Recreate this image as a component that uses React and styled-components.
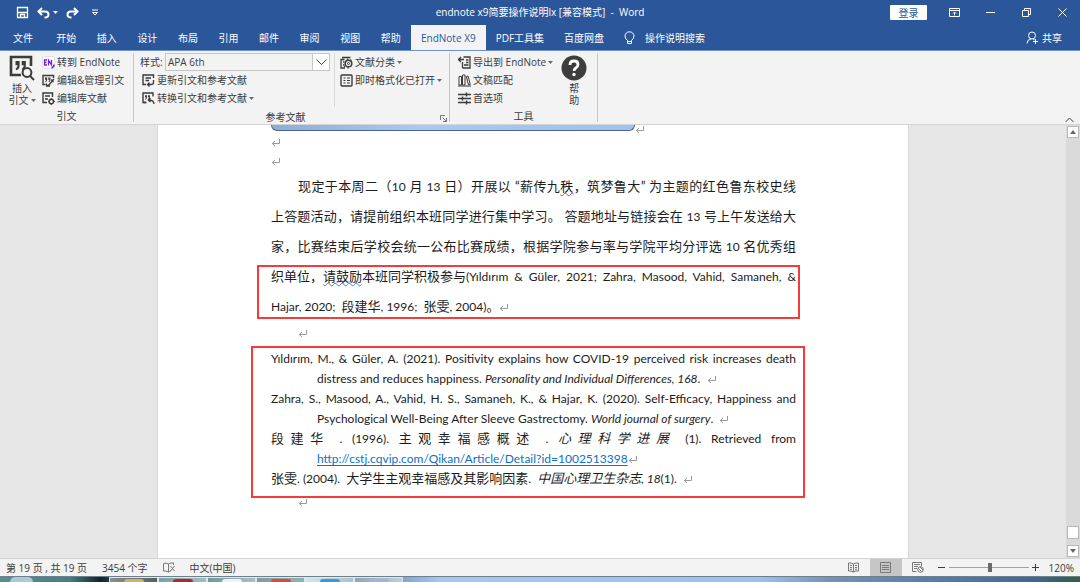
import React from "react";
import styled, { createGlobalStyle, css } from "styled-components";

const Global = createGlobalStyle`
  * { box-sizing: border-box; }
  body {
    margin: 0;
    font-family: "Open Sans", "Noto Sans CJK SC", sans-serif;
    font-size: 10px;
    line-height: 12px;
    color: #3b3b3b;
  }
  button, select, input { font: inherit; color: inherit; }
  button { margin: 0; padding: 0; border: 0; background: none; cursor: pointer; }
  svg { display: block; flex: none; }
`;

const Window = styled.div`
  display: flex;
  flex-direction: column;
  height: 100vh;
  overflow: hidden;
  background: #f3f3f3;
`;

/* ---------- header ---------- */
const Header = styled.header`
  background: #2b579a;
  color: #fff;
  border-bottom: 1px solid #6f92c6;
`;

const TitleBar = styled.div`
  display: grid;
  grid-template-columns: 1fr auto 1fr;
  align-items: center;
  height: 25px;
`;

const QuickAccess = styled.div`
  display: flex;
  align-items: center;
  gap: 8px;
  padding-left: 16px;
`;

const IconButton = styled.button`
  display: flex;
  align-items: center;
  gap: 3px;
`;

const Title = styled.h1`
  margin: 0 0 2px;
  font-size: 10px;
  font-weight: 400;
  white-space: pre;
`;

const Controls = styled.div`
  display: flex;
  align-items: center;
  justify-content: flex-end;
`;

const SignIn = styled.button`
  width: 37px;
  height: 15px;
  margin-right: 9px;
  background: #fff;
  color: #2b579a;
  border-radius: 1px;
`;

const WindowButton = styled.button`
  display: flex;
  align-items: center;
  justify-content: center;
  width: 36px;
  height: 25px;
`;

const TabBar = styled.nav`
  display: flex;
  align-items: stretch;
  height: 25px;
`;

const MainTabs = styled.div`
  display: grid;
  grid-template-columns: repeat(9, 1fr);
  width: 365px;
`;

const Tab = styled.button`
  padding: 0 ${(p) => p.$pad || 0}px;
  white-space: nowrap;
  ${(p) =>
    p.$active &&
    css`
      background: #f3f3f3;
      color: #2b579a;
    `}
`;

const TellMe = styled.button`
  display: flex;
  align-items: center;
  gap: 10px;
  margin-left: 10px;
`;

const Share = styled.button`
  display: flex;
  align-items: center;
  gap: 3px;
  margin-left: auto;
  padding-right: 18px;
`;

/* ---------- ribbon ---------- */
const Ribbon = styled.section`
  display: flex;
  flex: none;
  height: 74px;
  padding-top: 2px;
  border-bottom: 1px solid #d4d4d4;
  background: #f3f3f3;
`;

const Group = styled.div`
  display: flex;
  flex-direction: column;
  position: relative;
  width: ${(p) => p.$width}px;
  margin-bottom: 2px;
  border-right: 1px solid #c6c6c6;
`;

const GroupBody = styled.div`
  display: flex;
  flex: 1;
  padding-left: ${(p) => p.$pad}px;
`;

const GroupLabel = styled.div`
  height: 12px;
  padding-right: ${(p) => (p.$launcher ? 12 : 0)}px;
  text-align: center;
`;

const Launcher = styled.button`
  position: absolute;
  right: 2px;
  bottom: 0;
`;

const Column = styled.div`
  display: flex;
  flex-direction: column;
  ${(p) =>
    p.$ruled &&
    css`
      width: 195px;
      margin-right: 5px;
      margin-bottom: 4px;
      border-right: 1px solid #d9d9d9;
    `}
`;

const Command = styled.button`
  display: flex;
  align-items: center;
  gap: 2px;
  height: 18px;
  padding-left: ${(p) => p.$indent || 0}px;
  white-space: nowrap;
`;

const BigCommand = styled.button`
  display: flex;
  flex-direction: column;
  align-items: center;
  align-self: flex-start;
  width: 26px;
  padding-top: 2px;
  margin-right: ${(p) => p.$gap || 0}px;
  margin-left: ${(p) => p.$before || 0}px;
  white-space: nowrap;
`;

const BigText = styled.span`
  display: flex;
  align-items: center;
  gap: 2px;
  margin-top: ${(p) => (p.$first ? 1 : 0)}px;
`;

const StyleRow = styled.div`
  display: flex;
  align-items: center;
  height: 18px;
`;

const StyleLabel = styled.label`
  width: 25px;
  white-space: nowrap;
`;

const SelectWrap = styled.div`
  position: relative;
  width: 165px;
`;

const Select = styled.select`
  appearance: none;
  width: 100%;
  height: 18px;
  padding: 0 2px;
  border: 1px solid #c6c6c6;
  border-radius: 0;
  background: #f3f3f3;
`;

const SelectArrow = styled.span`
  position: absolute;
  top: 0;
  right: 0;
  display: flex;
  align-items: center;
  justify-content: center;
  width: 18px;
  height: 18px;
  border: 1px solid #c6c6c6;
  background: #fff;
  pointer-events: none;
`;

const Collapse = styled.button`
  align-self: flex-end;
  margin: 0 6px 1px auto;
`;

/* ---------- document ---------- */
const Workspace = styled.main`
  display: flex;
  flex: 1;
  min-height: 0;
  background: #e6e6e6;
`;

const Canvas = styled.div`
  flex: 1;
  overflow: hidden;
`;

const Page = styled.article`
  max-width: 750px;
  min-height: 100%;
  margin: 0 auto;
  padding: 0 112px 0 113px;
  background: #fff;
  box-shadow: 0 0 0 1px #d8d8d8;
  color: #1c1c1c;
  font-family: Lato, "Noto Sans CJK SC", sans-serif;
  font-size: 13px;
`;

const PictureRow = styled.div`
  display: flex;
  height: 8px;
`;

const PictureEdge = styled.div`
  width: 364px;
  height: 6px;
  border: 1px solid #4c658c;
  border-top: 0;
  border-radius: 0 0 6px 6px;
  background: linear-gradient(90deg, #8fadd2, #a7c9f2 40%, #9fc3ee);
`;

const Blank = styled.p`
  display: flex;
  align-items: center;
  height: ${(p) => p.$height}px;
  margin: 0;
  padding-left: ${(p) => (p.$indent ? 27 : 0)}px;
`;

const Line = styled.div`
  height: 30px;
  line-height: 30px;
  white-space: nowrap;
  padding-left: ${(p) => (p.$indent ? 27 : 0)}px;
  text-align-last: ${(p) => (p.$last ? "left" : "justify")};
`;

const Boxed = styled.div`
  position: relative;
  &::after {
    content: "";
    position: absolute;
    inset: ${(p) => p.$inset};
    border: 2px solid #f73a3a;
    pointer-events: none;
  }
`;

const References = styled(Boxed)`
  margin: 3px 0;
  font-size: 12px;
`;

const RefLine = styled.div`
  height: 20px;
  line-height: 20px;
  white-space: nowrap;
  padding-left: ${(p) => (p.$hang ? 46 : 0)}px;
  text-align-last: ${(p) => (p.$fill ? "justify" : "left")};
`;

const Han = styled.span`
  font-size: 13px;
  line-height: 18px;
`;

/* keeps its own width inside a justified line */
const Solid = styled.span`
  display: inline-block;
  text-align-last: left;
`;

const Latin = styled.span`
  font-size: 12px;
`;

const Squiggle = styled.span`
  text-decoration: underline wavy ${(p) => p.$color} 1px;
  text-underline-offset: 1px;
`;

const Link = styled.a`
  color: #0f6fc6;
  text-underline-offset: 2px;
`;

const MarkSvg = styled.svg`
  display: inline-block;
  vertical-align: ${(p) => (p.$top ? "top" : "middle")};
`;

const ScrollBar = styled.div`
  display: flex;
  flex-direction: column;
  width: 14px;
  padding: 1px;
  background: #dadada;
`;

const ScrollButton = styled.button`
  display: flex;
  align-items: center;
  justify-content: center;
  width: 12px;
  height: 12px;
  border: 1px solid #b8b8b8;
  background: #fff;
`;

const ScrollThumb = styled.div`
  height: 13px;
  margin: auto 0 6px;
  border: 1px solid #b8b8b8;
  background: #fff;
`;

/* ---------- status bar ---------- */
const StatusBar = styled.footer`
  display: flex;
  align-items: center;
  flex: none;
  height: 18px;
  padding: 0 6px;
  border-top: 1px solid #d4d4d4;
  white-space: nowrap;
`;

const StatusItem = styled.button`
  margin-right: 15px;
`;

const ViewButtons = styled.div`
  display: flex;
  margin: 0 3px 0 auto;
`;

const ViewButton = styled.button`
  display: flex;
  align-items: center;
  justify-content: center;
  width: 32px;
  height: 17px;
  background: ${(p) => (p.$active ? "#c6c6c6" : "none")};
`;

const ZoomButton = styled.button`
  width: 10px;
  height: 12px;
  display: flex;
  align-items: center;
  justify-content: center;
`;

const ZoomRange = styled.input`
  appearance: none;
  width: 80px;
  height: 12px;
  margin: 0 2px;
  background: linear-gradient(#a0a0a0, #a0a0a0) center / 100% 1px no-repeat;
  &::-webkit-slider-thumb {
    appearance: none;
    width: 4px;
    height: 9px;
    background: #6a6a6a;
  }
`;

const ZoomValue = styled.button`
  margin-left: 8px;
`;

/* ---------- desktop task bar ---------- */
const TaskBar = styled.div`
  display: flex;
  flex: none;
  height: 6px;
  padding-left: 109px;
  border-top: 1px solid #6f7f8c;
  background: linear-gradient(90deg, #55908e 0, #47807f 70px, #10262b 100px, #1d3a44 109px,
    #7fa3c8 400px, #a5c8f0 440px, #9cc2ec 760px, #7392b5 830px, #5079a5 960px, #41668e 1040px, #35604f 1066px);
  position: relative;
`;

const Task = styled.div`
  display: flex;
  justify-content: center;
  width: 49px;
  border: 1px solid #d9e8ea;
  border-bottom: 0;
  background: linear-gradient(90deg, ${(p) => p.$from}, ${(p) => p.$to});
`;

const TaskIcon = styled.span`
  width: 20px;
  height: 4px;
  margin-top: 1px;
  border-radius: 3px 3px 0 0;
  background: ${(p) => p.$color};
`;

const StartOrb = styled.span`
  position: absolute;
  left: 10px;
  top: 0;
  width: 23px;
  height: 5px;
  border-radius: 12px 12px 0 0;
  background: #a9cbdc;
`;

const Drawing = ({ w, h, children, color = "currentColor", sw = 1 }) => (
  <svg width={w} height={h} viewBox={`0 0 ${w} ${h}`} fill="none" stroke={color} strokeWidth={sw} aria-hidden="true">
    {children}
  </svg>
);

const Caret = ({ color = "#6a6a6a" }) => (
  <svg width="5" height="3" viewBox="0 0 5 3" aria-hidden="true">
    <path d="M0 0h5L2.500 3z" fill={color} />
  </svg>
);

const Mark = ({ top }) => (
  <MarkSvg $top={top} width="10" height="9" viewBox="0 0 10 9" fill="none" stroke="#999" aria-hidden="true">
    <path d="M8.500 1v4.500H1.500M4 3L1.200 5.500L4 8" />
  </MarkSvg>
);

const Quotes = ({ x, y, s = 1 }) => (
  <g transform={`translate(${x} ${y}) scale(${s})`} fill="currentColor" stroke="none">
    <path d="M0 0h3.600v3.600Q3.600 6.800 1 8L0 7Q1.800 5.800 1.800 3.600H0z" />
    <path d="M5.400 0H9v3.600Q9 6.800 6.400 8l-1-1Q7.200 5.800 7.200 3.600H5.400z" />
  </g>
);

const icons = {
  insert: (
    <Drawing w={26} h={26} sw={2}>
      <path d="M22 11V2H2v18h10M4 20h4" strokeWidth="2.600" />
      <Quotes x={6.5} y={6} s={1.15} />
      <circle cx="18" cy="17.500" r="4.400" />
      <path d="M21 21l4 4" />
    </Drawing>
  ),
  en: (
    <Drawing w={13} h={13}>
      <rect x="0.500" y="0.500" width="12" height="12" rx="1.500" fill="#fff" stroke="#e4def2" />
      <path d="M5 4H2.500v5H5M2.500 6.500h2M6.500 9.500V4.200l3 4.600V3.800" stroke="#6a29d9" strokeWidth="1.300" />
      <path d="M12 8.500q0 2.500-2.500 3.500" stroke="#6a29d9" strokeWidth="1.500" />
    </Drawing>
  ),
  manage: (
    <Drawing w={13} h={13}>
      <path d="M11.500 4V1.500H1v9h2.500" strokeWidth="1.400" />
      <Quotes x={3} y={3.5} s={0.6} />
      <path d="M12 5l-5.500 6.500H4.500V9.500M9 5.500l2.500 2.500M4 12h4" strokeWidth="1.300" />
    </Drawing>
  ),
  library: (
    <Drawing w={13} h={13}>
      <path d="M10.500 5V1H1v9.500h4M3 4h5M3 7h3" strokeWidth="1.400" />
      <circle cx="9.300" cy="9.500" r="2.200" strokeWidth="1.400" />
      <path d="M9.300 6v1.500M9.300 11.500v1.500M6 9.500h1M11.500 9.500h1.500" />
    </Drawing>
  ),
  update: (
    <Drawing w={13} h={13}>
      <path d="M11.500 4V1H1v9.500h3M3.500 4h5.500M3.500 6.500h3.500" strokeWidth="1.400" />
      <path d="M11.500 6v2.500q0 2-2.500 2H5.500M7.500 8.500l-2 2 2 2" strokeWidth="1.300" />
    </Drawing>
  ),
  convert: (
    <Drawing w={13} h={13}>
      <path d="M11 4.500V1H1v9.500h3" strokeWidth="1.400" />
      <Quotes x={3} y={3.3} s={0.55} />
      <path d="M12 12q0-4-5.500-4M8.500 6l-2.200 2 2.200 2M1.500 10.500h3" strokeWidth="1.300" />
    </Drawing>
  ),
  category: (
    <Drawing w={13} h={13}>
      <path d="M4.500 3.500H1v8.500h4M2 1.500h4.500l4 0M3 6h1.500M3 9h1.500" strokeWidth="1.300" />
      <circle cx="8.500" cy="7.500" r="3.300" strokeWidth="1.500" />
      <circle cx="8.500" cy="7.500" r="1" />
      <path d="M7.500 2.500V4M11 3.500L10.500 5M8 11v1.500M5 10l-1 1.500" strokeWidth="1.300" />
    </Drawing>
  ),
  instant: (
    <Drawing w={13} h={13}>
      <rect x="1" y="1" width="11" height="11" rx="1" strokeWidth="1.400" />
      <path d="M3.500 4h2M7 4h3M3.500 6.500h2M7 6.500h3M3.500 9h2M7 9h3" strokeWidth="1.200" />
    </Drawing>
  ),
  exportTo: (
    <Drawing w={13} h={13}>
      <path d="M5.500 1H12v11H4.500M0 3.500h6M3 1L0.500 3.500 3 6M8 4h2.500M8 6.500h2.500M6 9h4.500M4.500 6v6" strokeWidth="1.300" />
    </Drawing>
  ),
  match: (
    <Drawing w={13} h={13}>
      <path d="M1 2.500h2.500v8.500H1zM4.500 1h2.500v10H4.500zM8.300 2.500l1.700-.5 2.300 8.500-1.800.5zM0 12h13" />
    </Drawing>
  ),
  prefs: (
    <Drawing w={13} h={13}>
      <path d="M0 2.500h13M0 6.500h13M0 10.500h13M8.500 0.500v4M4.500 4.500v4M8.500 8.500v4" strokeWidth="1.500" />
    </Drawing>
  ),
  help: (
    <Drawing w={26} h={26}>
      <circle cx="13" cy="13" r="12.500" fill="#3d3d3d" stroke="none" />
      <path d="M9 10q0-4 4-4t4 3.500q0 2-2 3.300-2 1.200-2 3.200" stroke="#fff" strokeWidth="2.800" />
      <circle cx="13" cy="19.500" r="1.700" fill="#fff" stroke="none" />
    </Drawing>
  ),
};

const TABS = ["开始", "插入", "设计", "布局", "引用", "邮件", "审阅", "视图", "帮助"];

const TASKS = [
  ["#8a9092", "#56605f", "#d0b070"],
  ["#79a0a3", "#9dbfc2", "#b5252c"],
  ["#6f999b", "#a5c3c4", "#f1f1f1"],
  ["#7d9d9b", "#8fb2b2", "#d9493f"],
  ["#d5e5ec", "#a9c2d0", "#3b97dd"],
  ["#93a5b3", "#c0ced9", "#9db7dc"],
];

function Cmd({ icon, children, menu, indent }) {
  return (
    <Command $indent={indent}>
      {icons[icon]}
      <span>{children}</span>
      {menu && <Caret />}
    </Command>
  );
}

export default function App() {
  return (
    <Window>
      <Global />
      <Header>
        <TitleBar>
          <QuickAccess>
            <IconButton aria-label="保存">
              <Drawing w={13} h={13}>
                <path d="M1.500 1.500h10v10h-10zM1.500 6.500h10M4.500 11.500v-3h4v3" strokeWidth="1.300" />
              </Drawing>
            </IconButton>
            <IconButton aria-label="撤消">
              <Drawing w={13} h={12} sw={2}>
                <path d="M1.500 4.500h6.500q3.500 0 3.500 3t-4 3M5 1L1.500 4.500 5 8" />
              </Drawing>
              <Caret color="#fff" />
            </IconButton>
            <IconButton aria-label="重做">
              <Drawing w={13} h={12} sw={2}>
                <path d="M11.500 4.500H5q-3.500 0-3.500 3t4 3M8 1l3.500 3.500L8 8" />
              </Drawing>
            </IconButton>
            <IconButton aria-label="自定义快速访问工具栏">
              <Drawing w={16} h={8}>
                <path d="M5 1h6M5.500 3.500h5L8 6z" />
              </Drawing>
            </IconButton>
          </QuickAccess>
          <Title>{"endnote x9简要操作说明lx [兼容模式]  -  Word"}</Title>
          <Controls>
            <SignIn>登录</SignIn>
            <WindowButton aria-label="功能区显示选项">
              <Drawing w={11} h={9}>
                <path d="M0.500 0.500h10v8h-10zM0.500 2.500h10M5.500 7.500V4M4 5.500L5.500 4 7 5.500" />
              </Drawing>
            </WindowButton>
            <WindowButton aria-label="最小化">
              <Drawing w={9} h={9}>
                <path d="M0 4.500h9" />
              </Drawing>
            </WindowButton>
            <WindowButton aria-label="还原">
              <Drawing w={9} h={9}>
                <path d="M0.500 2.500h6v6h-6zM2.500 2.500v-2h6v6h-2" />
              </Drawing>
            </WindowButton>
            <WindowButton aria-label="关闭">
              <Drawing w={9} h={9}>
                <path d="M0.500 0.500l8 8M8.500 0.500l-8 8" />
              </Drawing>
            </WindowButton>
          </Controls>
        </TitleBar>
        <TabBar>
          <Tab $pad={13}>文件</Tab>
          <MainTabs>
            {TABS.map((t) => (
              <Tab key={t}>{t}</Tab>
            ))}
          </MainTabs>
          <Tab $active $pad={10}>EndNote X9</Tab>
          <Tab $pad={10}>PDF工具集</Tab>
          <Tab $pad={10}>百度网盘</Tab>
          <TellMe>
            <Drawing w={11} h={14}>
              <path d="M3.500 9.500Q1 7.500 1 5a4.500 4.200 0 0 1 9 0Q10 7.500 7.500 9.500v3h-4zM3.500 10.500h4" />
            </Drawing>
            操作说明搜索
          </TellMe>
          <Share>
            <Drawing w={13} h={13}>
              <circle cx="6" cy="4.500" r="3.500" />
              <path d="M1 12.500q0-4 4-4.500M7 8l1.500.8M9.500 8v5M7 10.500h5" />
            </Drawing>
            共享
          </Share>
        </TabBar>
      </Header>

      <Ribbon>
        <Group $width={134}>
          <GroupBody $pad={9}>
            <BigCommand $gap={7}>
              {icons.insert}
              <BigText $first>插入</BigText>
              <BigText>引文 <Caret /></BigText>
            </BigCommand>
            <Column>
              <Cmd icon="en">转到 EndNote</Cmd>
              <Cmd icon="manage">编辑&amp;管理引文</Cmd>
              <Cmd icon="library">编辑库文献</Cmd>
            </Column>
          </GroupBody>
          <GroupLabel>引文</GroupLabel>
        </Group>

        <Group $width={316}>
          <GroupBody $pad={6}>
            <Column $ruled>
              <StyleRow>
                <StyleLabel htmlFor="style">样式:</StyleLabel>
                <SelectWrap>
                  <Select id="style" defaultValue="APA 6th">
                    <option>APA 6th</option>
                  </Select>
                  <SelectArrow>
                    <Drawing w={11} h={7}>
                      <path d="M0.500 0.500l5 5 5-5" />
                    </Drawing>
                  </SelectArrow>
                </SelectWrap>
              </StyleRow>
              <Cmd icon="update" indent={2}>更新引文和参考文献</Cmd>
              <Cmd icon="convert" indent={2} menu>转换引文和参考文献</Cmd>
            </Column>
            <Column>
              <Cmd icon="category" menu>文献分类</Cmd>
              <Cmd icon="instant" menu>即时格式化已打开</Cmd>
            </Column>
          </GroupBody>
          <GroupLabel $launcher>参考文献</GroupLabel>
          <Launcher aria-label="参考文献选项">
            <Drawing w={7} h={7} color="#777">
              <path d="M0.500 5V0.500H5M2.500 2.500l4 4M6.500 3v3.500H3" />
            </Drawing>
          </Launcher>
        </Group>

        <Group $width={148}>
          <GroupBody $pad={8}>
            <Column>
              <Cmd icon="exportTo" menu>导出到 EndNote</Cmd>
              <Cmd icon="match">文稿匹配</Cmd>
              <Cmd icon="prefs">首选项</Cmd>
            </Column>
            <BigCommand $before={8}>
              {icons.help}
              <BigText $first>帮</BigText>
              <BigText>助</BigText>
            </BigCommand>
          </GroupBody>
          <GroupLabel>工具</GroupLabel>
        </Group>
        <Collapse aria-label="折叠功能区">
          <Drawing w={9} h={6}>
            <path d="M0.500 5l4-4 4 4" />
          </Drawing>
        </Collapse>
      </Ribbon>

      <Workspace>
        <Canvas>
          <Page>
            <PictureRow>
              <PictureEdge />
              <Mark top />
            </PictureRow>
            <Blank $height={19}><Mark /></Blank>
            <Blank $height={19}><Mark /></Blank>

            <Line $indent>
              现定于本周二（<Latin>10</Latin> 月 <Latin>13</Latin> 日）开展以 “薪传九<Squiggle $color="#e8404a">秩</Squiggle>，筑梦鲁大” 为主题的红色鲁东校史线
            </Line>
            <Line>上答题活动，请提前组织本班同学进行集中学习。 答题地址与链接会在 <Latin>13</Latin> 号上午发送给大</Line>
            <Line>家，比赛结束后学校会统一公布比赛成绩，根据学院参与率与学院平均分评选 <Latin>10</Latin> 名优秀组</Line>
            <Boxed $inset="4px -4px 2px -14px">
              <Line>
                <Solid>织单位，<Squiggle $color="#4a7fe0">请鼓励</Squiggle>本班同学积极参与</Solid><Latin>(Yıldırım &amp; Güler, 2021; Zahra, Masood, Vahid, Samaneh, &amp;</Latin>
              </Line>
              <Line $last>
                <Latin>Hajar, 2020;&nbsp; </Latin>段建华<Latin>, 1996;&nbsp; </Latin>张雯<Latin>, 2004)</Latin>。<Mark />
              </Line>
            </Boxed>

            <Blank $height={25} $indent><Mark /></Blank>

            <References $inset="-3px -9px -9px -20px">
              <RefLine $fill>Yıldırım, M., &amp; Güler, A. (2021). Positivity explains how COVID-19 perceived risk increases death</RefLine>
              <RefLine $hang>
                distress and reduces happiness. <em>Personality and Individual Differences, 168</em>.&nbsp; <Mark />
              </RefLine>
              <RefLine $fill>Zahra, S., Masood, A., Vahid, H. S., Samaneh, K., &amp; Hajar, K. (2020). Self-Efficacy, Happiness and</RefLine>
              <RefLine $hang>
                Psychological Well-Being After Sleeve Gastrectomy. <em>World journal of surgery</em>.&nbsp; <Mark />
              </RefLine>
              <RefLine $fill>
                <Han>段建华</Han> . (1996). <Han>主观幸福感概述</Han> . <em><Han>心理科学进展</Han></em> (1). Retrieved from
              </RefLine>
              <RefLine $hang>
                <Link href="http://cstj.cqvip.com/Qikan/Article/Detail?id=1002513398">http://cstj.cqvip.com/Qikan/Article/Detail?id=1002513398</Link>
                <Mark />
              </RefLine>
              <RefLine>
                <Han>张雯</Han>. (2004).&nbsp; <Han>大学生主观幸福感及其影响因素</Han>.&nbsp; <em><Han>中国心理卫生杂志</Han>, 18</em>(1).&nbsp; <Mark />
              </RefLine>
            </References>

            <Blank $height={20} $indent><Mark /></Blank>
          </Page>
        </Canvas>
        <ScrollBar>
          <ScrollButton aria-label="向上滚动">
            <Drawing w={6} h={4}><path d="M0 4h6L3 0z" fill="#666" stroke="none" /></Drawing>
          </ScrollButton>
          <ScrollThumb />
          <ScrollButton aria-label="向下滚动">
            <Drawing w={6} h={4}><path d="M0 0h6L3 4z" fill="#666" stroke="none" /></Drawing>
          </ScrollButton>
        </ScrollBar>
      </Workspace>

      <StatusBar>
        <StatusItem>第 19 页 , 共 19 页</StatusItem>
        <StatusItem>3454 个字</StatusItem>
        <StatusItem aria-label="校对">
          <Drawing w={12} h={11}>
            <path d="M5.500 10V2Q3 0.500 0.500 1.500V9Q3 8.500 5.500 10Q6.500 9 8 9M5.500 2Q7.500 0.500 10.500 1v2M7.500 4l4 5M11.500 4l-4 5" stroke="#777" />
          </Drawing>
        </StatusItem>
        <StatusItem>中文(中国)</StatusItem>
        <ViewButtons>
          <ViewButton aria-label="阅读视图">
            <Drawing w={11} h={11} color="#777">
              <path d="M5.500 10V2Q3 0.500 0.500 1V9Q3 8.500 5.500 10Q8 8.500 10.500 9V1Q8 0.500 5.500 2M2 3.500h2M2 5.500h2M2 7.300h2M7 3.500h2M7 5.500h2M7 7.300h2" />
            </Drawing>
          </ViewButton>
          <ViewButton $active aria-label="页面视图">
            <Drawing w={11} h={11} color="#777">
              <path d="M0.500 0.500h10v10h-10zM2 3.500h7M2 5.500h7M2 7.500h7" />
            </Drawing>
          </ViewButton>
          <ViewButton aria-label="Web 版式视图">
            <Drawing w={12} h={11} color="#777">
              <path d="M9.500 4V0.500h-9v9h4M2 2.500h6M2 4.500h4M2 6.500h3" />
              <circle cx="8.500" cy="7.500" r="2.800" />
              <path d="M6.500 6.500l3 3M8 5l3 3" />
            </Drawing>
          </ViewButton>
        </ViewButtons>
        <ZoomButton aria-label="缩小">
          <Drawing w={7} h={7}><path d="M0 3.500h7" /></Drawing>
        </ZoomButton>
        <ZoomRange type="range" min="0" max="100" defaultValue="52" aria-label="缩放" />
        <ZoomButton aria-label="放大">
          <Drawing w={7} h={7}><path d="M0 3.500h7M3.500 0v7" /></Drawing>
        </ZoomButton>
        <ZoomValue>120%</ZoomValue>
      </StatusBar>

      <TaskBar>
        <StartOrb />
        {TASKS.map(([from, to, color]) => (
          <Task key={color} $from={from} $to={to}>
            <TaskIcon $color={color} />
          </Task>
        ))}
      </TaskBar>
    </Window>
  );
}
